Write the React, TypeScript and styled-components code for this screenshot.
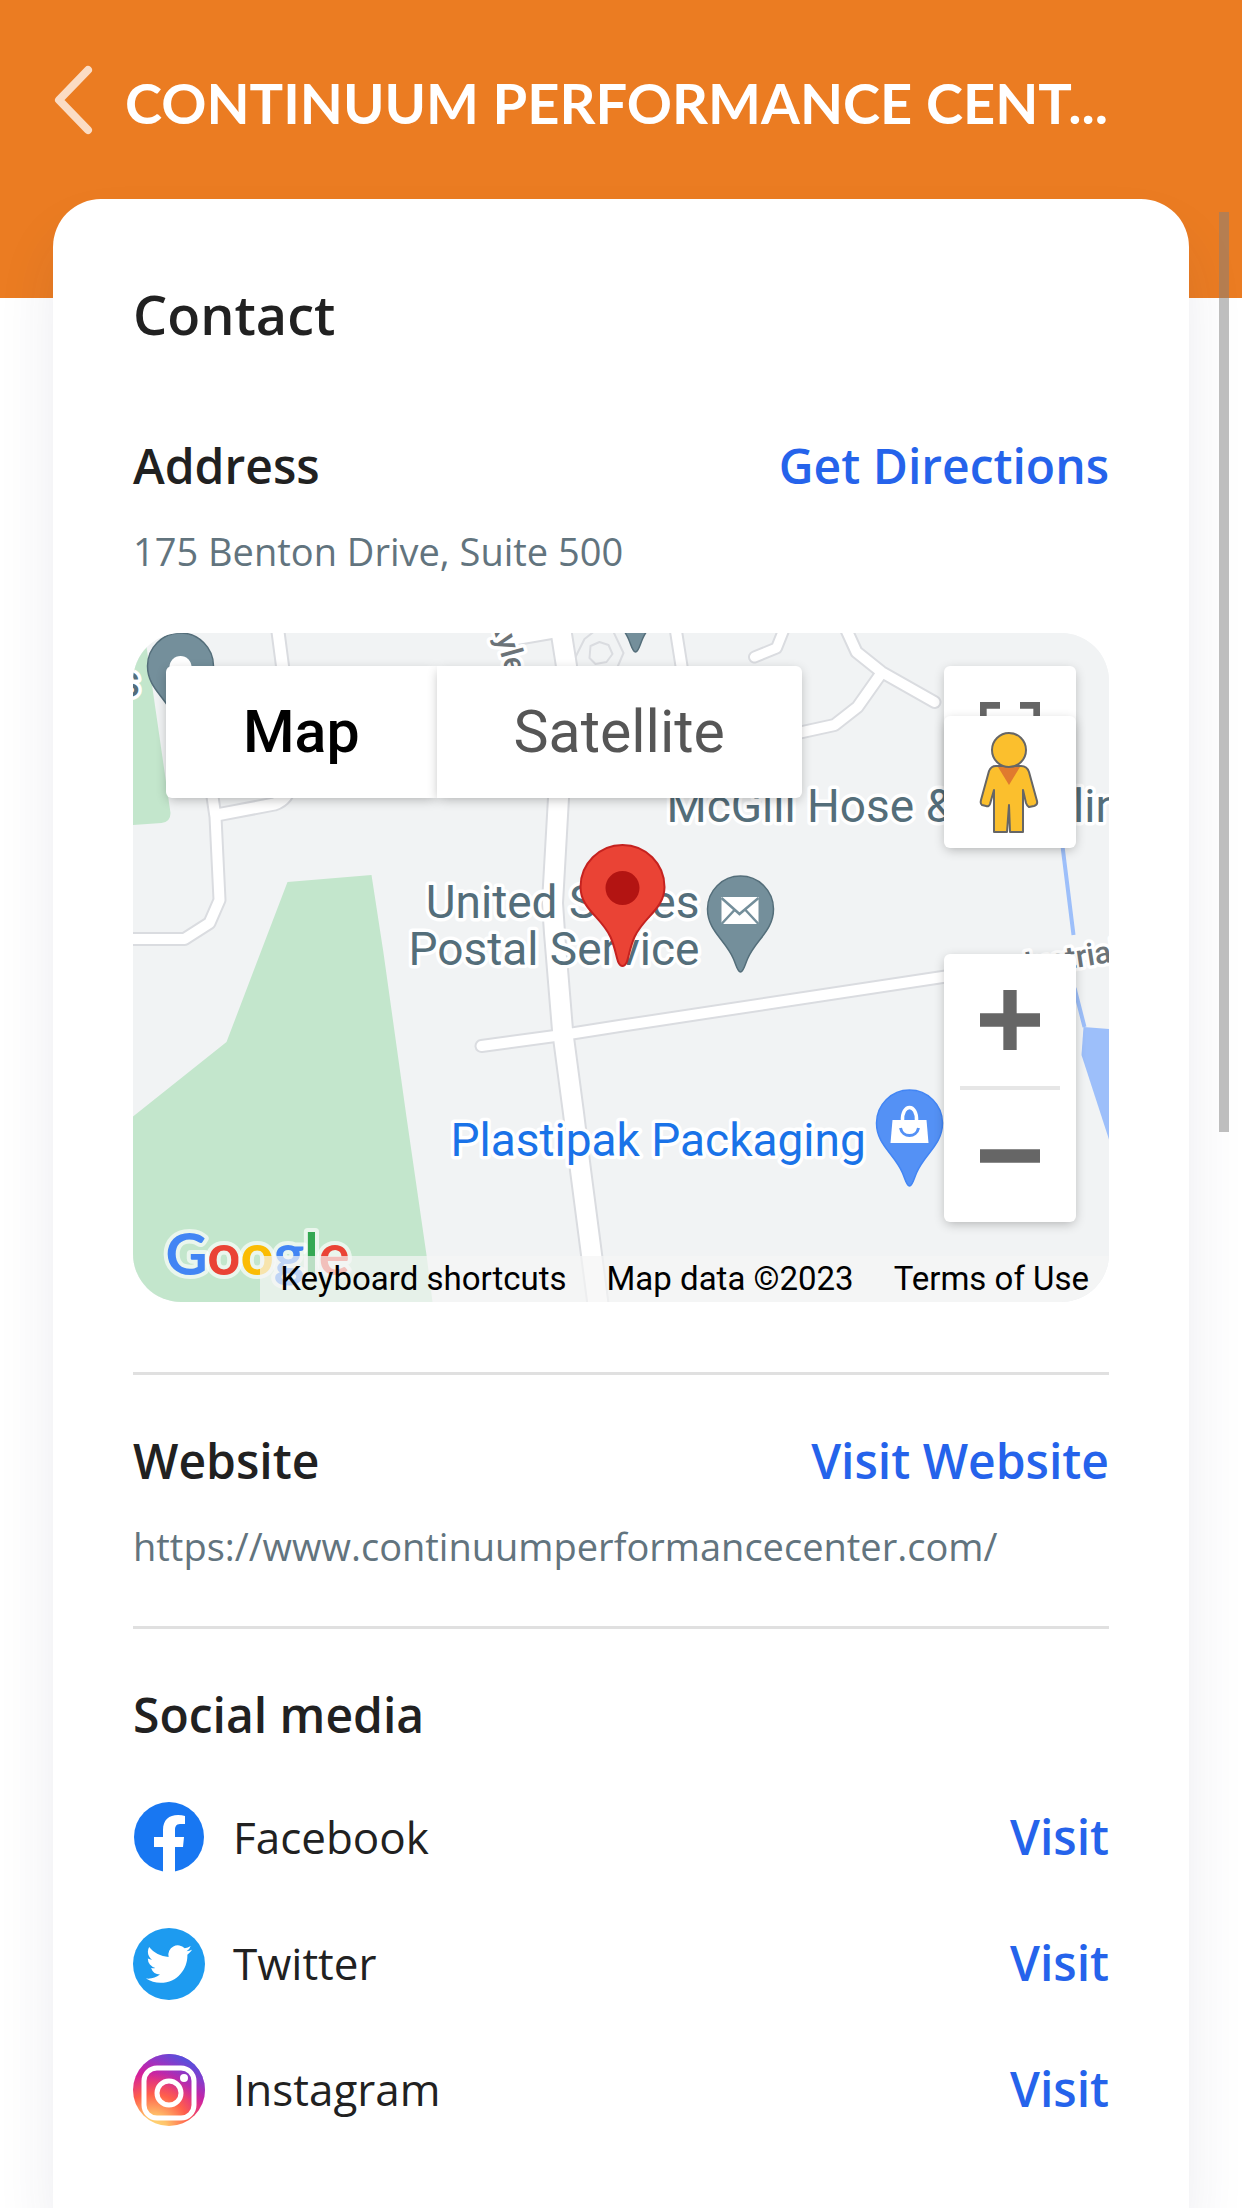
import React from "react";
import styled, { createGlobalStyle } from "styled-components";

const GlobalStyle = createGlobalStyle`
  *, *::before, *::after { box-sizing: border-box; }
  body { margin: 0; background: #ffffff; font-family: "Open Sans", "Noto Sans", sans-serif; color: #212121; }
  h1, h2, h3, p, ul { margin: 0; padding: 0; }
  button { margin: 0; padding: 0; border: 0; background: none; font: inherit; color: inherit; cursor: pointer; }
  svg { display: block; }
`;

const Screen = styled.div`
  display: flex;
  flex-direction: column;
  min-height: 100vh;
  overflow: hidden;
`;

const Header = styled.header`
  padding: 0 53px 99px;
  background: #eb7c22;
`;

const HeaderRow = styled.div`
  display: flex;
  align-items: center;
  gap: 32px;
  height: 199px;
`;

const BackButton = styled.button`
  flex: none;
`;

const Title = styled.h1`
  min-width: 0;
  padding-top: 6px;
  font: 700 56px/80px Lato, "Open Sans", sans-serif;
  color: #ffffff;
  white-space: nowrap;
`;

const Card = styled.main`
  flex: 1;
  margin: -99px 53px 0;
  padding: 74px 80px 0;
  border-radius: 48px 48px 0 0;
  background: #ffffff;
  box-shadow: 0 36px 60px rgba(40, 40, 90, 0.09);
`;

const CardTitle = styled.h2`
  margin-bottom: 25px;
  font-size: 54px;
  line-height: 82px;
  font-weight: 600;
`;

const Section = styled.section`
  padding: 50px 0;

  & + & {
    border-top: 3px solid #e0e0e0;
  }
`;

const SectionHead = styled.div`
  display: flex;
  justify-content: space-between;
  font-size: 48px;
  line-height: 72px;
`;

const SectionTitle = styled.h3`
  font-size: 48px;
  font-weight: 600;
`;

const ActionLink = styled.a`
  color: #2563eb;
  font-weight: 600;
  text-decoration: none;
`;

const Detail = styled.p`
  margin-top: 19px;
  font-size: 38px;
  line-height: 60px;
  color: #62747e;
  overflow-wrap: anywhere;
`;

const MapFrame = styled.div`
  position: relative;
  height: 669px;
  margin: 52px 0 20px;
  border-radius: 48px;
  overflow: hidden;
  background: #f1f3f4;
  font-family: Roboto, "Open Sans", sans-serif;
`;

const MapCanvas = styled.svg`
  width: 100%;
  height: 100%;
`;

const panelShadow = "0 3px 12px -2px rgba(0, 0, 0, 0.3)";

const MapTypes = styled.div`
  position: absolute;
  top: 33px;
  left: 33px;
  display: flex;
  height: 132px;
`;

const MapType = styled.button<{ $active?: boolean }>`
  padding: 0 77px 2px;
  border-radius: ${(p) => (p.$active ? "6px 0 0 6px" : "0 6px 6px 0")};
  background: #ffffff;
  box-shadow: ${panelShadow};
  font-size: 59px;
  font-weight: ${(p) => (p.$active ? 500 : 400)};
  color: ${(p) => (p.$active ? "#000000" : "#565656")};
`;

const Panel = styled.div<{ $top: number }>`
  position: absolute;
  top: ${(p) => p.$top}px;
  right: 33px;
  display: flex;
  flex-direction: column;
  align-items: center;
  width: 132px;
  border-radius: 6px;
  background: #ffffff;
  box-shadow: ${panelShadow};
`;

const PanelButton = styled.button`
  display: grid;
  place-items: center;
  width: 132px;
  height: 132px;
`;

const PanelRule = styled.div`
  width: 100px;
  height: 4px;
  background: #e6e6e6;
`;

const Attribution = styled.div`
  position: absolute;
  right: 0;
  bottom: 0;
  display: flex;
  font-size: 33px;
  line-height: 46px;
  color: #000000;

  > * {
    padding: 0 20px;
    background: rgba(245, 245, 245, 0.7);
    color: inherit;
    text-decoration: none;
    white-space: nowrap;
  }
`;

const SocialList = styled.ul`
  display: flex;
  flex-direction: column;
  gap: 54px;
  margin-top: 51px;
  list-style: none;
`;

const SocialRow = styled.li`
  display: flex;
  height: 72px;
  font-size: 48px;
  line-height: 70px;
`;

const SocialName = styled.span`
  flex: 1;
  margin-left: 28px;
  font-size: 44px;
`;

const ScrollThumb = styled.div`
  position: fixed;
  top: 212px;
  right: 13px;
  width: 10px;
  height: 920px;
  background: rgba(128, 128, 128, 0.5);
`;

const roads: { d: string; w: number }[] = [
  { d: "M145 -5L150 33L158 150Q156 166 142 171L84 182", w: 11 },
  { d: "M78 150L83 184L87 267L77 290L52 306L-5 306", w: 10 },
  { d: "M378 6L430 -3", w: 12 },
  { d: "M428 -5L434 33L426 165L420 270L422 300L430 397L441 480L448 537L466 675", w: 19 },
  { d: "M349 413L430 402L487 393L810 344L980 318", w: 10 },
  { d: "M543 -5L549 33L552 60", w: 10 },
  { d: "M652 -5L644 15L622 24", w: 9 },
  { d: "M713 -5L724 19L749 39L802 69", w: 10 },
  { d: "M749 40L725 74L702 92L620 110", w: 10 },
];

const pinPath = "M0 63C-3 63 -4 57 -7 50C-15 31 -33 22 -33 0A33 33 0 0 1 33 0C33 22 15 31 7 50C4 57 3 63 0 63Z";

function MapDrawing() {
  return (
    <MapCanvas viewBox="0 0 977 669" preserveAspectRatio="xMidYMid slice" role="img" aria-label="Map">
      <rect width="977" height="669" fill="#f1f3f4" />
      <path d="M0 0H12L38 180Q38 189 29 190L0 192Z" fill="#c3e6cc" />
      <path d="M155 249L239 242L251 320L274 484L294 622L300 669H0V484L94 409Z" fill="#c3e6cc" />
      <path d="M929 205L941 302M942 355L952 394" fill="none" stroke="#9dbffa" strokeWidth="4" />
      <path d="M951 394L977 396V508L949 422Z" fill="#9dbffa" />
      <g fill="none" strokeLinecap="round" strokeLinejoin="round">
        <path d="M442 26L452 6L461 -1H481L491 20L485 34" stroke="#dadce0" strokeWidth="2" />
        <path d="M458 13L467 9L476 12L480 21L474 29L463 31L457 25Z" stroke="#dadce0" strokeWidth="2" />
        {roads.map((r) => (
          <path key={r.d} d={r.d} stroke="#dadce0" strokeWidth={r.w + 4} />
        ))}
        {roads.map((r) => (
          <path key={r.d} d={r.d} stroke="#ffffff" strokeWidth={r.w} />
        ))}
      </g>
      <g fontSize="46" fill="#546e7a" stroke="#ffffff" strokeWidth="7" strokeLinejoin="round" paintOrder="stroke">
        <text x="8" y="64" textAnchor="end">Hills</text>
        <text x="534" y="189">McGill Hose &amp; Coupling</text>
        <text x="567" y="285" textAnchor="end">United States</text>
        <text x="567" y="332" textAnchor="end">Postal Service</text>
        <text x="318" y="523" fill="#1a73e8">Plastipak Packaging</text>
        <g fontSize="31" fontWeight="500" fill="#6b7378">
          <text transform="translate(358 -14) rotate(74)">Kyle</text>
          <text transform="translate(859 348) rotate(-9)">Industrial Dr</text>
        </g>
      </g>
      <g fill="#748f9b" stroke="#546e7a" strokeWidth="1.5">
        <path d={pinPath} transform="translate(48 33)" />
        <path d={pinPath} transform="translate(503 -44)" />
        <path d={pinPath} transform="translate(608 276)" />
      </g>
      <circle cx="48" cy="34" r="11" fill="#ffffff" />
      <path d="M589 264H626V291H589Z" fill="#ffffff" />
      <path d="M589 265L607 281L626 265M589 291L602 277M626 291L613 277" fill="none" stroke="#748f9b" strokeWidth="2.5" />
      <path d={pinPath} transform="translate(777 490)" fill="#5491f5" stroke="#4285f4" strokeWidth="1.5" />
      <path d="M760 487H794L796 510H758Z" fill="#ffffff" />
      <path d="M770 488C769 470 785 470 784 488" fill="none" stroke="#ffffff" strokeWidth="3.5" />
      <path d="M768 495C770 505 784 505 786 495" fill="none" stroke="#5491f5" strokeWidth="3" />
      <path
        d="M490 333C484 333 485 320 478 304C469 284 448 276 448 254A42 42 0 0 1 532 254C532 276 511 284 502 304C495 320 496 333 490 333Z"
        fill="#ea4335"
        stroke="#c5221f"
        strokeWidth="2"
      />
      <circle cx="490" cy="255" r="17" fill="#b31412" />
      <text
        x="33"
        y="642"
        fontFamily="Lato, sans-serif"
        fontSize="58"
        fontWeight="700"
        stroke="#ffffff"
        strokeOpacity="0.65"
        strokeWidth="8"
        strokeLinejoin="round"
        paintOrder="stroke"
      >
        <tspan fill="#4285f4">G</tspan>
        <tspan fill="#ea4335">o</tspan>
        <tspan fill="#fbbc04">o</tspan>
        <tspan fill="#4285f4">g</tspan>
        <tspan fill="#34a853">l</tspan>
        <tspan fill="#ea4335">e</tspan>
      </text>
    </MapCanvas>
  );
}

function Pegman() {
  return (
    <svg width="62" height="102" viewBox="0 0 62 102" stroke="#666666" strokeWidth="2" strokeLinejoin="round">
      <path
        d="M17 35H42Q48 35 50 41L58 70Q59 74 55 75L50 76Q48 75 47 72L44 59V101H31L30 74L28 101H15V59L11 73Q10 76 7 75L3 74Q1 73 2 69L10 40Q12 35 17 35Z"
        fill="#fbbf2d"
      />
      <path d="M19 36H41L30 54Z" fill="#e07a2e" stroke="none" />
      <circle cx="30" cy="19" r="17" fill="#fbbf2d" />
    </svg>
  );
}

function FacebookIcon() {
  return (
    <svg width="72" height="72" viewBox="0 0 72 72">
      <circle cx="36" cy="35" r="35" fill="#1877f2" />
      <path d="M30 71V45H21V35H30V28C30 18 36 13 45 13Q49 13 52 14V22H47C43 22 42 25 42 28V35H51L50 45H42V71Q36 72 30 71Z" fill="#ffffff" />
    </svg>
  );
}

function TwitterIcon() {
  return (
    <svg width="72" height="72" viewBox="0 0 72 72">
      <circle cx="36" cy="36" r="36" fill="#1d9bf0" />
      <path
        transform="translate(13 13) scale(1.92)"
        fill="#ffffff"
        d="M23.953 4.57a10 10 0 0 1-2.825.775 4.958 4.958 0 0 0 2.163-2.723c-.951.555-2.005.959-3.127 1.184a4.92 4.92 0 0 0-8.384 4.482C7.69 8.095 4.067 6.13 1.64 3.162a4.822 4.822 0 0 0-.666 2.475c0 1.71.87 3.213 2.188 4.096a4.904 4.904 0 0 1-2.228-.616v.06a4.923 4.923 0 0 0 3.946 4.827 4.996 4.996 0 0 1-2.212.085 4.936 4.936 0 0 0 4.604 3.417 9.867 9.867 0 0 1-6.102 2.105c-.39 0-.779-.023-1.17-.067a13.995 13.995 0 0 0 7.557 2.209c9.053 0 13.998-7.496 13.998-13.985 0-.21 0-.42-.015-.63A9.935 9.935 0 0 0 24 4.59z"
      />
    </svg>
  );
}

function InstagramIcon() {
  return (
    <svg width="72" height="72" viewBox="0 0 72 72">
      <defs>
        <radialGradient id="ig-warm" gradientUnits="userSpaceOnUse" cx="20" cy="76" r="72">
          <stop offset="0" stopColor="#ffdd77" />
          <stop offset="0.2" stopColor="#ffc36a" />
          <stop offset="0.5" stopColor="#ff5f4b" />
          <stop offset="0.8" stopColor="#d4209b" />
          <stop offset="1" stopColor="#b02bb8" />
        </radialGradient>
        <linearGradient id="ig-cool" gradientUnits="userSpaceOnUse" x1="52" y1="2" x2="34" y2="34">
          <stop offset="0" stopColor="#4a55e0" />
          <stop offset="1" stopColor="#a030c8" stopOpacity="0" />
        </linearGradient>
      </defs>
      <circle cx="36" cy="36" r="36" fill="url(#ig-warm)" />
      <circle cx="36" cy="36" r="36" fill="url(#ig-cool)" />
      <g fill="none" stroke="#ffffff" strokeWidth="5">
        <rect x="11" y="14" width="50" height="50" rx="13" />
        <circle cx="36" cy="39" r="12" />
      </g>
      <circle cx="51" cy="24" r="4" fill="#ffffff" />
    </svg>
  );
}

const networks = [
  { name: "Facebook", Icon: FacebookIcon },
  { name: "Twitter", Icon: TwitterIcon },
  { name: "Instagram", Icon: InstagramIcon },
];

export default function App() {
  return (
    <Screen>
      <GlobalStyle />
      <Header>
        <HeaderRow>
          <BackButton type="button" aria-label="Back">
            <svg width="40" height="72" viewBox="0 0 40 72" fill="none" stroke="#fbdcc4" strokeWidth="8" strokeLinecap="round" strokeLinejoin="round">
              <path d="M35 6L6 36L35 66" />
            </svg>
          </BackButton>
          <Title>CONTINUUM PERFORMANCE CENT...</Title>
        </HeaderRow>
      </Header>
      <Card>
        <CardTitle>Contact</CardTitle>
        <Section>
          <SectionHead>
            <SectionTitle>Address</SectionTitle>
            <ActionLink href="#directions">Get Directions</ActionLink>
          </SectionHead>
          <Detail>175 Benton Drive, Suite 500</Detail>
          <MapFrame>
            <MapDrawing />
            <MapTypes>
              <MapType type="button" $active>Map</MapType>
              <MapType type="button">Satellite</MapType>
            </MapTypes>
            <Panel $top={33}>
              <PanelButton type="button" aria-label="Toggle fullscreen view">
                <svg width="60" height="60" viewBox="0 0 18 18" fill="#666666">
                  <path d="M0 0v6h2V2h4V0H0zm16 0h-4v2h4v4h2V0h-2zm0 16h-4v2h6v-6h-2v4zM2 12H0v6h6v-2H2v-4z" />
                </svg>
              </PanelButton>
            </Panel>
            <Panel $top={83}>
              <PanelButton type="button" aria-label="Open Street View">
                <Pegman />
              </PanelButton>
            </Panel>
            <Panel $top={321}>
              <PanelButton type="button" aria-label="Zoom in">
                <svg width="60" height="60" viewBox="0 0 18 18" fill="#666666">
                  <path d="M18 7h-7V0H7v7H0v4h7v7h4v-7h7z" />
                </svg>
              </PanelButton>
              <PanelRule />
              <PanelButton type="button" aria-label="Zoom out">
                <svg width="60" height="60" viewBox="0 0 18 18" fill="#666666">
                  <path d="M0 7h18v4H0z" />
                </svg>
              </PanelButton>
            </Panel>
            <Attribution>
              <button type="button">Keyboard shortcuts</button>
              <span>Map data ©2023</span>
              <a href="#terms">Terms of Use</a>
            </Attribution>
          </MapFrame>
        </Section>
        <Section>
          <SectionHead>
            <SectionTitle>Website</SectionTitle>
            <ActionLink href="https://www.continuumperformancecenter.com/">Visit Website</ActionLink>
          </SectionHead>
          <Detail>https://www.continuumperformancecenter.com/</Detail>
        </Section>
        <Section>
          <SectionHead>
            <SectionTitle>Social media</SectionTitle>
          </SectionHead>
          <SocialList>
            {networks.map(({ name, Icon }) => (
              <SocialRow key={name}>
                <Icon />
                <SocialName>{name}</SocialName>
                <ActionLink href={`#${name.toLowerCase()}`}>Visit</ActionLink>
              </SocialRow>
            ))}
          </SocialList>
        </Section>
      </Card>
      <ScrollThumb />
    </Screen>
  );
}
